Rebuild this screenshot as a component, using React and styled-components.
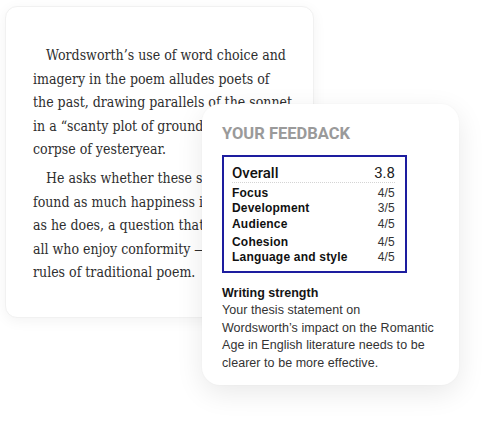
import React from "react";
import styled, { createGlobalStyle } from "styled-components";

const GlobalStyle = createGlobalStyle`
  html, body {
    margin: 0;
    padding: 0;
    background: #ffffff;
  }
  * { box-sizing: border-box; }
`;

const Stage = styled.div`
  position: relative;
  width: 501px;
  height: 429px;
  padding: 6px 0 0 5px;
  background: #ffffff;
  overflow: hidden;
`;

const Article = styled.article`
  width: 309px;
  height: 312px;
  padding: 37px 26px 0 27px;
  background: #ffffff;
  border: 1px solid #f1f1f1;
  border-radius: 12px;
  box-shadow: 0 3px 14px rgba(0, 0, 0, 0.05);
  font-family: "DejaVu Serif Condensed", "DejaVu Serif", serif;
  font-stretch: semi-condensed;
  font-size: 14px;
  line-height: 23.5px;
  color: #2e2e2e;
`;

const Paragraph = styled.p`
  margin: 0 0 5.5px;
  text-indent: 13px;
  white-space: nowrap;
`;

/* Feedback panel floats over the article */
const FeedbackCard = styled.section`
  position: absolute;
  left: 202px;
  top: 104px;
  width: 257px;
  height: 281px;
  padding: 20px 20px 0 20px;
  background: #ffffff;
  border-radius: 18px;
  box-shadow: 0 8px 28px rgba(0, 0, 0, 0.09), 0 0 2px rgba(0, 0, 0, 0.04);
  font-family: "Liberation Sans", Arial, sans-serif;
  color: #111;
`;

const Title = styled.h2`
  margin: 0;
  font-family: Roboto, "Liberation Sans", sans-serif;
  font-weight: 700;
  font-size: 16.5px;
  line-height: 20px;
  color: #9a9a9a;
`;

const ScoreBox = styled.div`
  margin-top: 11px;
  width: 185px;
  height: 118px;
  padding: 8px 10px 0 8px;
  border: 2px solid #1d1d9f;
`;

const OverallRow = styled.div`
  display: flex;
  justify-content: space-between;
  align-items: baseline;
  border-bottom: 1px dotted #d4d4d4;
  font-family: Roboto, "Liberation Sans", sans-serif;
  font-size: 15px;
  line-height: 17px;
  font-weight: 500;
  color: #111;
`;

const OverallScore = styled.span`
  font-weight: 400;
  color: #222;
`;

const Rows = styled.div`
  display: flex;
  flex-direction: column;
  padding-top: 3px;
`;

const Row = styled.div`
  display: flex;
  justify-content: space-between;
  align-items: baseline;
  margin-top: ${(p) => (p.$spaced ? "2.7px" : "0")};
  font-size: 12px;
  line-height: 15.3px;
`;

const Criterion = styled.span`
  font-weight: 700;
  color: #111;
  letter-spacing: 0.2px;
`;

const Score = styled.span`
  color: #333;
  letter-spacing: 0.2px;
`;

const StrengthTitle = styled.h3`
  margin: 11px 0 0;
  font-size: 12.5px;
  line-height: 18px;
  font-weight: 700;
  color: #151515;
`;

const StrengthText = styled.p`
  margin: 0;
  font-size: 12.5px;
  line-height: 17.7px;
  color: #333;
  letter-spacing: 0.05px;
`;

const criteria = [
  { name: "Focus", score: "4/5" },
  { name: "Development", score: "3/5" },
  { name: "Audience", score: "4/5" },
  { name: "Cohesion", score: "4/5", spaced: true },
  { name: "Language and style", score: "4/5" },
];

export default function App() {
  return (
    <>
      <GlobalStyle />
      <Stage>
        <Article>
          <Paragraph>
            Wordsworth’s use of word choice and
            <br />
            imagery in the poem alludes poets of
            <br />
            the past, drawing parallels of the sonnet
            <br />
            in a “scanty plot of ground” with a
            <br />
            corpse of yesteryear.
          </Paragraph>
          <Paragraph>
            He asks whether these sonnets
            <br />
            found as much happiness in it
            <br />
            as he does, a question that asks
            <br />
            all who enjoy conformity — to
            <br />
            rules of traditional poem.
          </Paragraph>
        </Article>

        <FeedbackCard>
          <Title>YOUR FEEDBACK</Title>
          <ScoreBox>
            <OverallRow>
              <span>Overall</span>
              <OverallScore>3.8</OverallScore>
            </OverallRow>
            <Rows>
              {criteria.map((c) => (
                <Row key={c.name} $spaced={c.spaced}>
                  <Criterion>{c.name}</Criterion>
                  <Score>{c.score}</Score>
                </Row>
              ))}
            </Rows>
          </ScoreBox>
          <StrengthTitle>Writing strength</StrengthTitle>
          <StrengthText>
            Your thesis statement on
            <br />
            Wordsworth’s impact on the Romantic
            <br />
            Age in English literature needs to be
            <br />
            clearer to be more effective.
          </StrengthText>
        </FeedbackCard>
      </Stage>
    </>
  );
}
